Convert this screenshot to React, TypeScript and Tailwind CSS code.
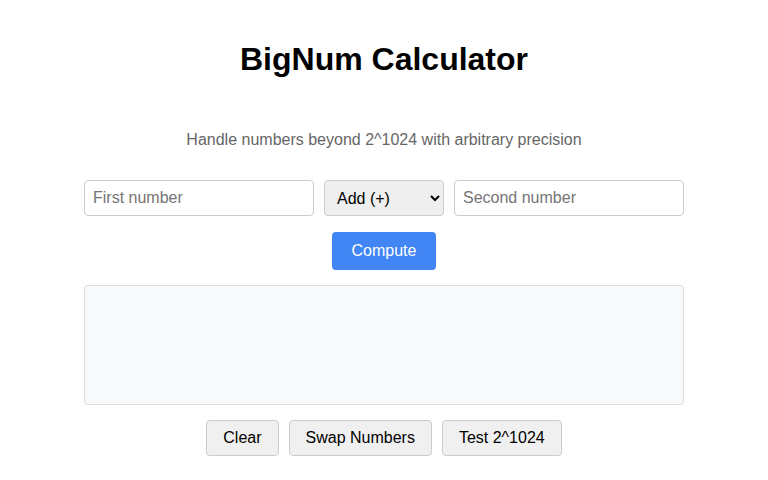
export default function App() {
  return (
    <div className="min-h-screen bg-white font-['Liberation_Sans',Arial,sans-serif] text-black">
      <div className="mx-auto w-[600px] pt-[41px]">
        <h1 className="text-center text-[32px] font-bold leading-[37px]">BigNum Calculator</h1>
        <p className="mt-[53px] text-center text-[16px] leading-[18px] text-[#666]">
          Handle numbers beyond 2^1024 with arbitrary precision
        </p>

        <div className="mt-[31px] flex gap-[10px]">
          <input
            type="text"
            placeholder="First number"
            className="h-[36px] w-[230px] rounded-[4px] border border-[#ccc] px-2 text-[16px] placeholder:text-[#757575] outline-none"
          />
          <select
            defaultValue="add"
            className="h-[36px] w-[120px] rounded-[4px] border border-[#ccc] bg-[#efefef] pl-[8px] pr-1 text-[16px] text-black"
          >
            <option value="add">Add (+)</option>
            <option value="sub">Subtract (-)</option>
            <option value="mul">Multiply (*)</option>
            <option value="div">Divide (/)</option>
          </select>
          <input
            type="text"
            placeholder="Second number"
            className="h-[36px] w-[230px] rounded-[4px] border border-[#ccc] px-2 text-[16px] placeholder:text-[#757575] outline-none"
          />
        </div>

        <div className="mt-4 flex justify-center">
          <button className="h-[38px] rounded-[4px] bg-[#4285f4] px-5 text-[16px] text-white">Compute</button>
        </div>

        <div className="mt-[15px] h-[120px] rounded-[4px] border border-[#ddd] bg-[#f8f9fa]" />

        <div className="mt-[15px] flex justify-center gap-[10px]">
          <button className="h-[36px] rounded-[4px] border border-[#ccc] bg-[#f0f0f0] px-4 text-[16px]">Clear</button>
          <button className="h-[36px] rounded-[4px] border border-[#ccc] bg-[#f0f0f0] px-4 text-[16px]">Swap Numbers</button>
          <button className="h-[36px] rounded-[4px] border border-[#ccc] bg-[#f0f0f0] px-4 text-[16px]">Test 2^1024</button>
        </div>
      </div>
    </div>
  );
}
